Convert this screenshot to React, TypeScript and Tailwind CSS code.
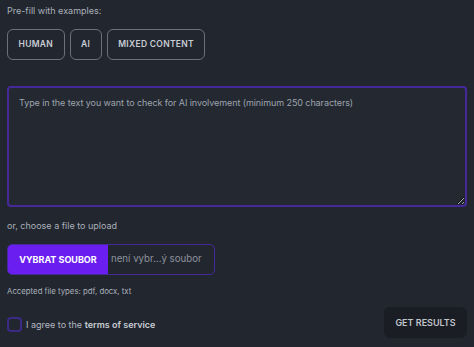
export default function App() {
  const examples = ["HUMAN", "AI", "MIXED CONTENT"];

  return (
    <div
      className="h-[347px] w-[474px] overflow-hidden bg-[#22262f] px-[7px] pt-[4px] text-[#c8ccd3]"
      style={{ fontFamily: "Inter, 'Noto Sans', sans-serif" }}
    >
      <p className="h-[14px] text-[9px] leading-[14px] text-[#aab0ba]">Pre-fill with examples:</p>

      <div className="mt-[11px] flex gap-[5px]">
        {examples.map((e) => (
          <button
            key={e}
            className="h-[31px] rounded-[6px] border border-[#6b717c] px-[10.5px] text-[8.5px] font-semibold tracking-[0.3px] text-[#c9cdd4]"
          >
            {e}
          </button>
        ))}
      </div>

      <textarea
        className="mt-[26px] block h-[121px] w-full resize-y rounded-[4px] border-2 border-[#45299a] bg-[#232831] px-[10px] py-[8px] text-[9px] leading-[14px] tracking-[-0.08px] text-[#c8ccd3] outline-none placeholder:text-[#9ea4ae]"
        placeholder="Type in the text you want to check for AI involvement (minimum 250 characters)"
      />

      <p className="mt-[12px] h-[14px] text-[9px] leading-[14px] text-[#aab0ba]">or, choose a file to upload</p>

      <div className="mt-[11px] flex h-[31px] w-[208px] items-stretch overflow-hidden rounded-[5px] border border-[#45299a]">
        <span className="flex w-[100px] items-center justify-center bg-[#6a1ff0] text-[9px] font-bold text-white">
          VYBRAT SOUBOR
        </span>
        <span className="flex items-center pl-[3px] text-[9.7px] text-[#8d929c]">není vybr...ý soubor</span>
      </div>

      <p className="mt-[10px] h-[12px] text-[7.8px] leading-[12px] text-[#aab0ba]">Accepted file types: pdf, docx, txt</p>

      <div className="mt-[4px] flex items-end justify-between">
        <label className="mb-[6px] flex items-center gap-[4px] text-[9px] text-[#b2b8c1]">
          <span className="block h-[15px] w-[15px] rounded-[4px] border-2 border-[#3a2a86] bg-[#22262f]" />
          <span>
            I agree to the <b className="font-semibold text-[#c8ccd3]">terms of service</b>
          </span>
        </label>
        <button className="mt-[6px] h-[31px] w-[83px] rounded-[6px] bg-[#1a1d24] text-[9px] font-semibold text-[#c0c4cb]">
          GET RESULTS
        </button>
      </div>
    </div>
  );
}
